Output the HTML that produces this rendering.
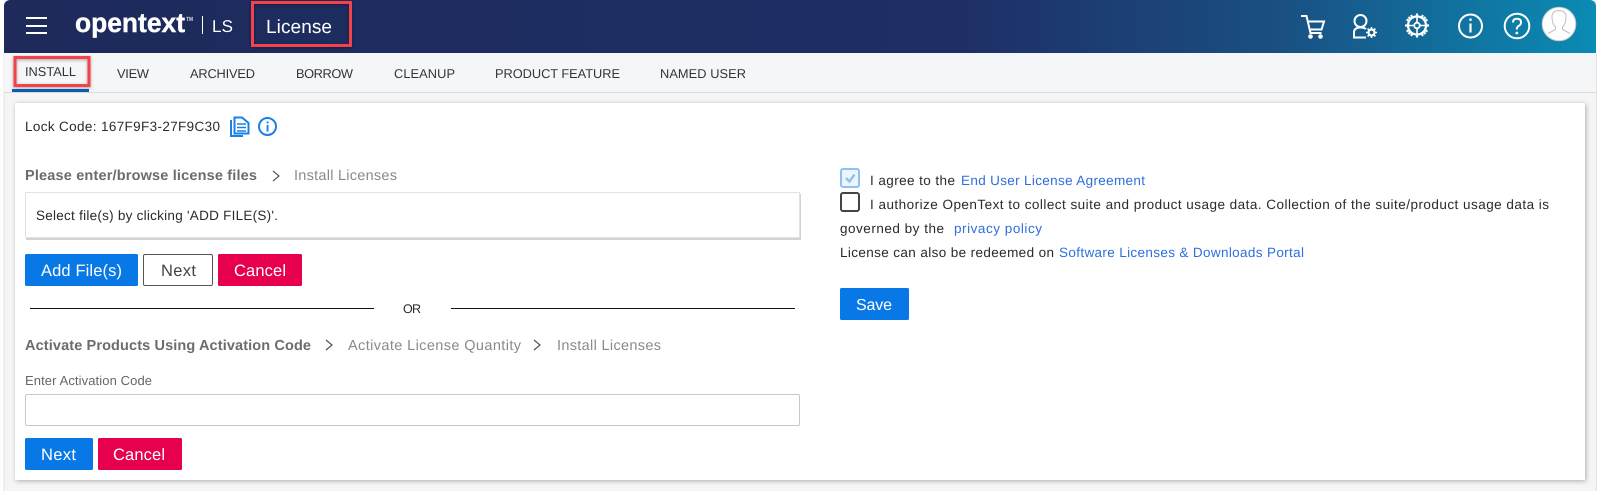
<!DOCTYPE html>
<html><head><meta charset="utf-8"><title>License</title>
<style>
html,body{margin:0;padding:0;background:#f5f5f6;width:1599px;height:491px;overflow:hidden}
svg{display:block;position:absolute;left:0;top:0}
text{font-family:"Liberation Sans",sans-serif;font-size:13.5px;fill:#2b2b2b;text-rendering:geometricPrecision}
.tab{font-size:12.8px;fill:#333}
.g{font-size:14.5px;fill:#8a8a8a}
.b{font-size:14.5px;font-weight:bold;fill:#6c6c6c}
.l{fill:#2f6fdc}
.btn{font-size:16.5px;fill:#fff}
</style></head><body>
<svg width="1599" height="491" viewBox="0 0 1599 491" xmlns="http://www.w3.org/2000/svg">
<defs>
<linearGradient id="hd" x1="0" y1="0" x2="1" y2="0"><stop offset="0" stop-color="#1d2a5a"/><stop offset=".6" stop-color="#1e2f66"/><stop offset=".8" stop-color="#1a4f82"/><stop offset="1" stop-color="#0a8cb4"/></linearGradient>
<filter id="sh" x="-2%" y="-5%" width="104%" height="110%"><feDropShadow dx="1" dy="1" stdDeviation="2.500" flood-color="#000" flood-opacity=".3"/></filter>
<filter id="rs" x="-10%" y="-10%" width="120%" height="125%"><feDropShadow dx="0" dy="1" stdDeviation="1.500" flood-color="#000" flood-opacity=".35"/></filter>
</defs>
<rect width="1599" height="491" fill="#f5f5f6"/>
<rect x="0" y="0" width="4" height="491" fill="#fff"/>
<rect x="1596" y="0" width="3" height="491" fill="#fff"/>
<rect x="3.500" y="53" width="1" height="438" fill="#e2e2e2"/>
<rect x="1596" y="53" width="1" height="438" fill="#e2e2e2"/>
<path d="M4 53V6a6 6 0 0 1 6-6H1590a6 6 0 0 1 6 6V53Z" fill="url(#hd)"/>
<rect x="4" y="53" width="1592" height="39" fill="#f5f6f8"/>
<rect x="4" y="92" width="1592" height="1" fill="#dcdcdc"/>

<!-- hamburger -->
<path d="M26 18H47M26 26H47M26 33H47" stroke="#fff" stroke-width="2"/>
<!-- logo -->
<text x="75" y="32" textLength="110" lengthAdjust="spacingAndGlyphs" style="font-size:27px;font-weight:bold;fill:#fff;stroke:#fff;stroke-width:.4px">opentext</text>
<text x="186" y="21" textLength="7" lengthAdjust="spacingAndGlyphs" style="font-size:6px;font-weight:bold;fill:#ddd">TM</text>
<rect x="202" y="16" width="1" height="18" fill="#fff"/>
<text x="212" y="32" textLength="21" style="font-size:17px;fill:#fff">LS</text>
<text x="266" y="33" textLength="66" style="font-size:19px;fill:#fff">License</text>
<rect x="252.500" y="2.500" width="98" height="43" fill="none" stroke="#f4424b" stroke-width="3" filter="url(#rs)"/>

<!-- header icons -->
<g fill="none" stroke="#fff" stroke-width="2">
<path d="M1301 16H1306.500L1310.500 33H1321.500"/>
<path d="M1307.500 21.500H1324L1321.500 29.500H1309.500"/>
<circle cx="1310.500" cy="36.500" r="1.300" fill="#fff"/><circle cx="1320.500" cy="36.500" r="1.300" fill="#fff"/>
<circle cx="1360.500" cy="21" r="6"/>
<path d="M1354 37.500V32.500Q1354 27.500 1360.500 27.500Q1364 27.500 1366 29M1353 37.500H1366"/>
<circle cx="1371.500" cy="32.500" r="3" stroke-width="2.200"/>
<path d="M1371.500 27V29M1371.500 36V38M1366 32.500H1368M1375 32.500H1377M1367.600 28.600L1369 30M1374 35L1375.400 36.400M1375.400 28.600L1374 30M1369 35L1367.600 36.400" stroke-width="1.600"/>
<circle cx="1417" cy="25.500" r="9" stroke-width="2.200"/>
<circle cx="1417" cy="25.500" r="2.800" stroke-width="1.800"/>
<path d="M1417 22.500V16.500M1417 28.500V34.500M1414 25.500H1408M1420 25.500H1426" stroke-width="1.600"/>
<path d="M1417 13.500V16.500M1417 34.500V37.500M1405 25.500H1408M1426 25.500H1429M1408.500 17L1410.600 19.100M1423.400 31.900L1425.500 34M1408.500 34L1410.600 31.900M1423.400 19.100L1425.500 17M1411 15.100L1412.500 17.700M1421.500 33.300L1423 35.900M1406.600 19.500L1409.200 21M1424.800 30L1427.400 31.500M1423 15.100L1421.500 17.700M1412.500 33.300L1411 35.900M1427.400 19.500L1424.800 21M1409.200 30L1406.600 31.500" stroke-width="2.200"/>
<circle cx="1470.500" cy="26" r="11.500"/>
<circle cx="1517" cy="26" r="12.300"/>
</g>
<rect x="1469.400" y="23.500" width="2.200" height="9" fill="#fff"/><rect x="1469.400" y="18.500" width="2.200" height="2.400" fill="#fff"/>
<path d="M1513 22.500Q1513 18.800 1517 18.800Q1521 18.800 1521 22.500Q1521 24.800 1518.500 26Q1516.800 27 1516.800 29.500" fill="none" stroke="#fff" stroke-width="2"/>
<circle cx="1516.800" cy="33" r="1.400" fill="#fff"/>
<circle cx="1559" cy="24" r="16.800" fill="#fff" stroke="#c9c9c9" stroke-width="1"/>
<path d="M1552 17Q1552 10.500 1559 10.500Q1566 10.500 1566 17Q1566 24 1562.500 27V29.500L1570 33.500M1552 17Q1552 24 1555.500 27V29.500L1548 33.500" fill="none" stroke="#bdbdbd" stroke-width="1"/>

<!-- tabs -->
<text class="tab" x="25" y="76" textLength="51">INSTALL</text>
<rect x="15" y="57.500" width="74" height="28" fill="none" stroke="#f4424b" stroke-width="3" filter="url(#rs)"/>
<rect x="12" y="89" width="77" height="3" fill="#0b5cb0"/>
<text class="tab" x="117" y="78" textLength="32">VIEW</text>
<text class="tab" x="190" y="78" textLength="65">ARCHIVED</text>
<text class="tab" x="296" y="78" textLength="57">BORROW</text>
<text class="tab" x="394" y="78" textLength="61">CLEANUP</text>
<text class="tab" x="495" y="78" textLength="125">PRODUCT FEATURE</text>
<text class="tab" x="660" y="78" textLength="86">NAMED USER</text>

<!-- card -->
<rect x="15" y="103" width="1570" height="377" fill="#fff" filter="url(#sh)"/>

<text x="25" y="131" textLength="195">Lock Code: 167F9F3-27F9C30</text>
<g fill="none" stroke="#1a7fe8" stroke-width="2">
<path d="M231 120V136H243"/>
<path d="M234.500 117.500H242L248.500 123V133.500H234.500Z" />
<path d="M237 124H246M237 127.500H246M237 131H246" stroke-width="1.500"/>
<circle cx="267.500" cy="126.500" r="8.500"/>
</g>
<rect x="266.600" y="125" width="1.900" height="6.500" fill="#1a7fe8"/><rect x="266.600" y="121.500" width="1.900" height="2" fill="#1a7fe8"/>

<text class="b" x="25" y="180" textLength="232">Please enter/browse license files</text>
<path d="M273 171L279 176L273 181" fill="none" stroke="#555" stroke-width="1.200"/>
<text class="g" x="294" y="180" textLength="103">Install Licenses</text>

<rect x="26" y="194" width="775" height="46" fill="#d4d4d4"/>
<rect x="25.500" y="192.500" width="774" height="45" fill="#fff" stroke="#e2e2e2"/>
<text x="36" y="220" textLength="242">Select file(s) by clicking 'ADD FILE(S)'.</text>

<rect x="25" y="254" width="113" height="32" rx="1.500" fill="#0878e6"/>
<text class="btn" x="41" y="276" textLength="81">Add File(s)</text>
<rect x="143.500" y="254.500" width="69" height="31" rx="1.500" fill="#fff" stroke="#555"/>
<text class="btn" x="161" y="276" textLength="35" style="fill:#444">Next</text>
<rect x="218" y="254" width="84" height="32" rx="1.500" fill="#e6004d"/>
<text class="btn" x="234" y="276" textLength="52">Cancel</text>

<rect x="30" y="308" width="344" height="1" fill="#111"/>
<text x="403" y="313" textLength="18" style="font-size:12.500px">OR</text>
<rect x="451" y="308" width="344" height="1" fill="#111"/>

<text class="b" x="25" y="350" textLength="286">Activate Products Using Activation Code</text>
<path d="M326 340L332 345L326 350" fill="none" stroke="#555" stroke-width="1.200"/>
<text class="g" x="348" y="350" textLength="173">Activate License Quantity</text>
<path d="M534 340L540 345L534 350" fill="none" stroke="#555" stroke-width="1.200"/>
<text class="g" x="557" y="350" textLength="104">Install Licenses</text>

<text x="25" y="385" textLength="127" style="font-size:13px;fill:#666">Enter Activation Code</text>
<rect x="25.500" y="394.500" width="774" height="31" rx="1.500" fill="#fff" stroke="#c8c8c8"/>

<rect x="25" y="438" width="68" height="32" rx="1.500" fill="#0878e6"/>
<text class="btn" x="41" y="460" textLength="35">Next</text>
<rect x="98" y="438" width="84" height="32" rx="1.500" fill="#e6004d"/>
<text class="btn" x="113" y="460" textLength="52">Cancel</text>

<!-- right -->
<rect x="841" y="169" width="18" height="18" rx="2" fill="#eef4fc" stroke="#8fc0f5" stroke-width="2"/>
<path d="M846 178L849.500 181.500L854.500 174.500" fill="none" stroke="#8fc0f5" stroke-width="2.500"/>
<text x="870" y="185" textLength="85">I agree to the</text>
<text class="l" x="961" y="185" textLength="184">End User License Agreement</text>
<rect x="841" y="193" width="18" height="18" rx="2" fill="#fff" stroke="#444" stroke-width="2"/>
<text x="870" y="209" textLength="679">I authorize OpenText to collect suite and product usage data. Collection of the suite/product usage data is</text>
<text x="840" y="233" textLength="104">governed by the</text>
<text class="l" x="954" y="233" textLength="88">privacy policy</text>
<text x="840" y="257" textLength="214">License can also be redeemed on</text>
<text class="l" x="1059" y="257" textLength="245">Software Licenses &amp; Downloads Portal</text>
<rect x="840" y="288" width="69" height="32" rx="1.500" fill="#0878e6"/>
<text class="btn" x="856" y="310" textLength="36" style="font-size:16px">Save</text>
</svg>
</body></html>
